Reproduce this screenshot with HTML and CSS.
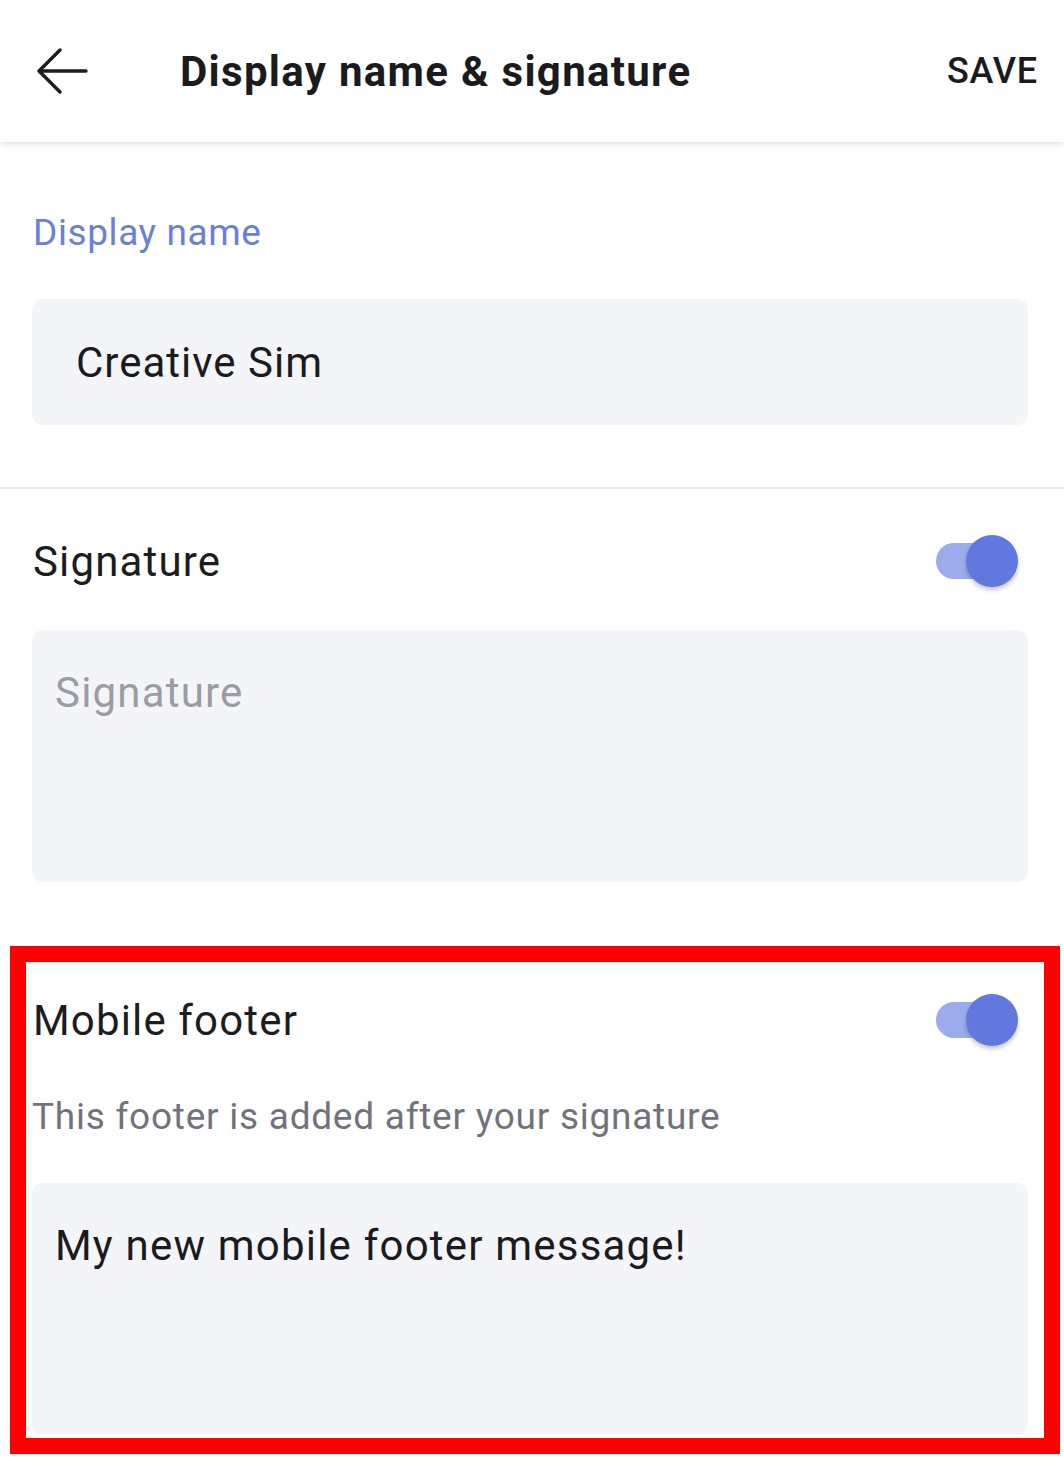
FILE: index.html
```html
<!DOCTYPE html>
<html lang="en">
<head>
  <meta charset="UTF-8" />
  <meta name="viewport" content="width=device-width, initial-scale=1.0" />
  <title>Display name &amp; signature</title>
  <link rel="stylesheet" href="styles.css">
</head>
<body>
  <header class="topbar">
    <button class="back" aria-label="Back">
      <svg width="52" height="46" viewBox="0 0 52 46">
        <path d="M50 23H4M24 2L3 23l21 21" fill="none" stroke="#1d1d1f" stroke-width="3.4" stroke-linecap="round" stroke-linejoin="round"/>
      </svg>
    </button>
    <h1 class="title">Display name &amp; signature</h1>
    <button class="save">SAVE</button>
  </header>

  <main class="settings">
    <section class="block name-block">
      <label class="field-label" for="name">Display name</label>
      <div class="input" id="name">Creative Sim</div>
    </section>

    <section class="block sig-block">
      <div class="row">
        <span class="row-title">Signature</span>
        <span class="switch on"><span class="knob"></span></span>
      </div>
      <div class="textarea placeholder">Signature</div>
    </section>

    <section class="block footer-block">
      <div class="row">
        <span class="row-title">Mobile footer</span>
        <span class="switch on"><span class="knob"></span></span>
      </div>
      <p class="hint">This footer is added after your signature</p>
      <div class="textarea">My new mobile footer message!</div>
      <div class="highlight"></div>
    </section>
  </main>
</body>
</html>
```

FILE: styles.css
```css
* {
  box-sizing: border-box;
}

body {
  margin: 0;
  font-family: Roboto, "Noto Sans", Arial, sans-serif;
  background-color: #ffffff;
  color: #1d1d20;
}

/* top app bar */
.topbar {
  height: 142px;
  display: flex;
  align-items: center;
  padding: 0 26px 0 36px;
  background-color: #ffffff;
  box-shadow: 0 2px 6px rgba(0, 0, 0, 0.12);
  position: relative;
  z-index: 1;
}

.back {
  border: none;
  background: none;
  padding: 0;
  width: 52px;
  height: 46px;
  display: flex;
  cursor: pointer;
}

.title {
  flex: 1;
  margin: 0 0 0 92px;
  font-size: 42px;
  font-weight: 700;
  letter-spacing: 1.3px;
  color: #1b1b1e;
}

.save {
  border: none;
  background: none;
  padding: 0;
  font-family: inherit;
  font-size: 36px;
  font-weight: 500;
  letter-spacing: 0.8px;
  color: #1b1b1e;
  cursor: pointer;
}

/* content */
.block {
  padding: 0 36px 0 32px;
}

.name-block {
  padding-top: 69px;
  padding-bottom: 62px;
  border-bottom: 2px solid #e9e9ec;
}

.field-label {
  display: block;
  font-size: 37px;
  line-height: 44px;
  letter-spacing: 0.6px;
  color: #6a80d8;
  margin-bottom: 44px;
  padding-left: 1px;
}

.input {
  height: 126px;
  display: flex;
  align-items: center;
  padding-left: 44px;
  border-radius: 10px;
  background-color: #f4f5f9;
  font-size: 42px;
  letter-spacing: 1px;
  color: #1b1b1e;
}

.row {
  height: 60px;
  display: flex;
  align-items: center;
  justify-content: space-between;
}

.row-title {
  font-size: 42px;
  letter-spacing: 1.15px;
  padding-left: 1px;
}

.switch {
  position: relative;
  width: 82px;
  height: 52px;
  margin-right: 10px;
}

.switch::before {
  content: "";
  position: absolute;
  left: 0;
  top: 8px;
  width: 70px;
  height: 36px;
  border-radius: 18px;
  background-color: #9cabeb;
}

.switch .knob {
  position: absolute;
  right: 0;
  top: 0;
  width: 52px;
  height: 52px;
  border-radius: 50%;
  background-color: #6179de;
  box-shadow: 0 3px 4px rgba(0, 0, 0, 0.22);
}

.sig-block {
  padding-top: 42px;
}

.sig-block .row {
  margin-bottom: 39px;
}

.textarea {
  height: 252px;
  padding: 37px 22px 0 23px;
  border-radius: 10px;
  background-color: #f4f5f9;
  font-size: 42px;
  line-height: 52px;
  letter-spacing: 1.2px;
  color: #1b1b1e;
}

.textarea.placeholder {
  color: #9b9da4;
}

.footer-block {
  position: relative;
  padding-top: 108px;
  padding-bottom: 44px;
}

.hint {
  margin: 45px 0 44px;
  font-size: 37px;
  line-height: 44px;
  letter-spacing: 0.75px;
  color: #70737b;
}

/* red outline drawn over the footer settings */
.highlight {
  position: absolute;
  left: 10px;
  right: 4px;
  top: 64px;
  height: 508px;
  border: 16px solid #ff0000;
  pointer-events: none;
}
```
